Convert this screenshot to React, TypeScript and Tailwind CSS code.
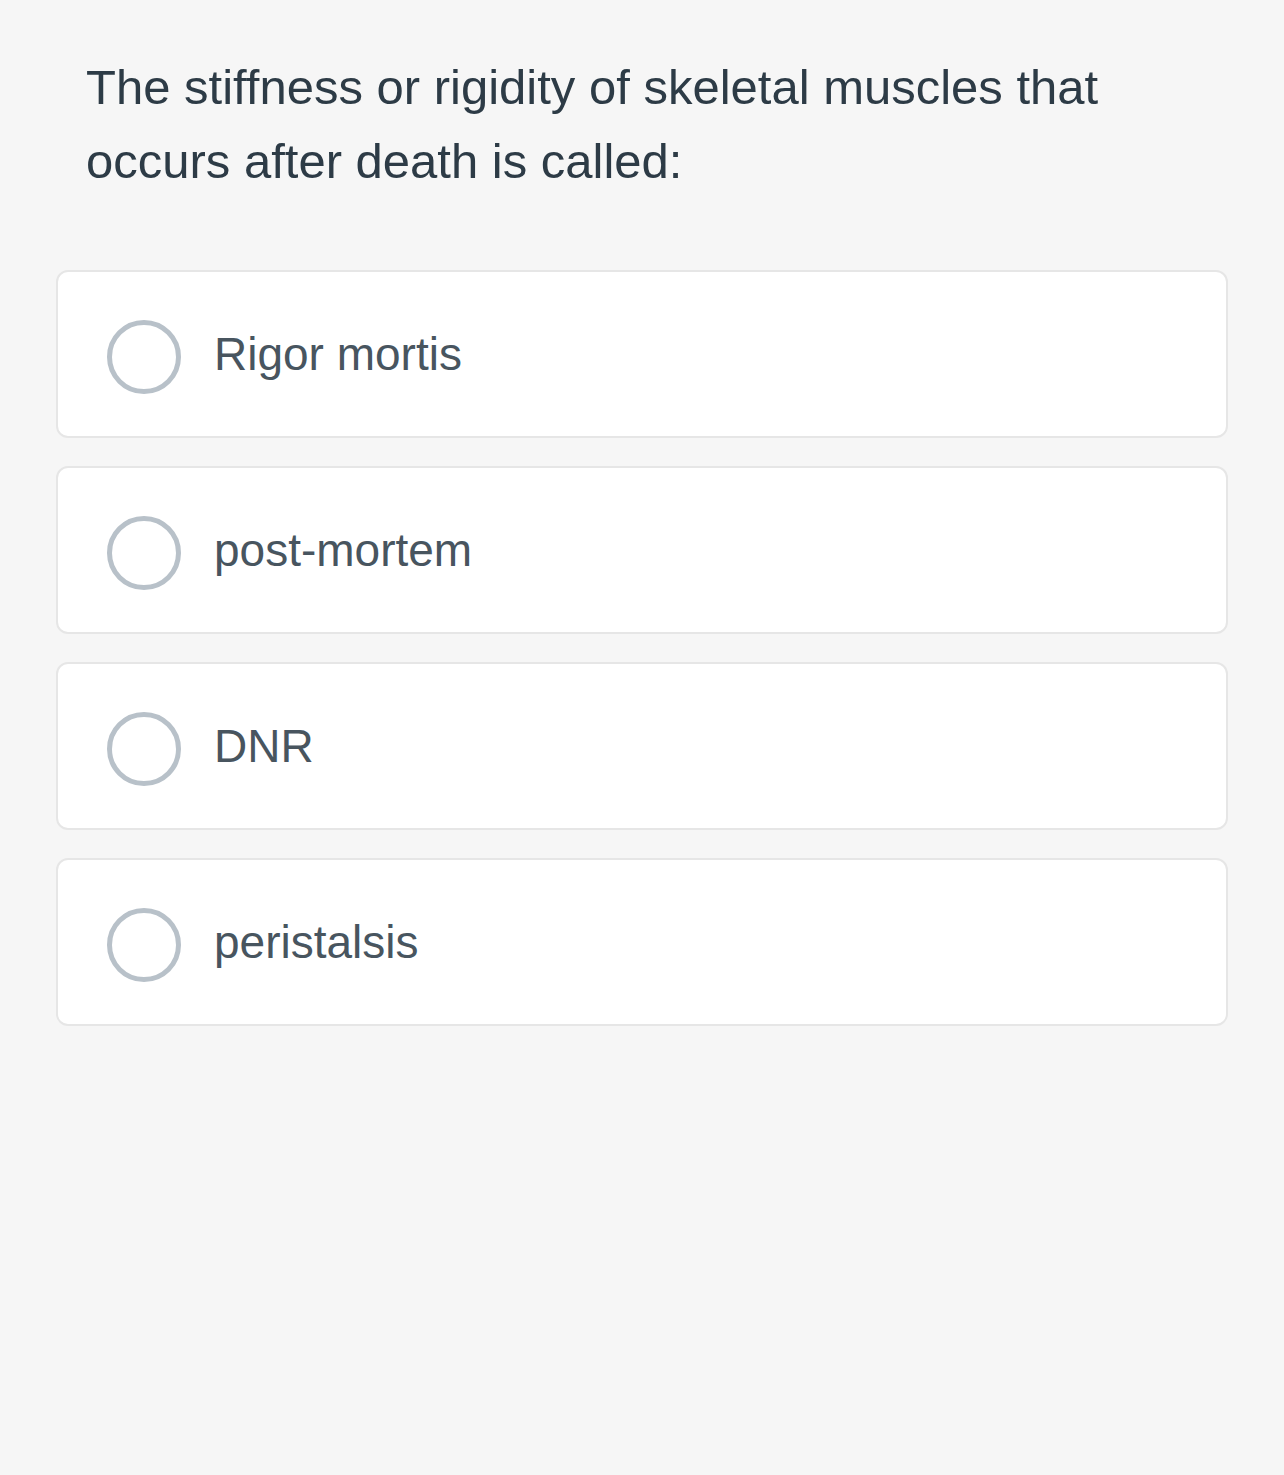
import React from "react";

const options = ["Rigor mortis", "post-mortem", "DNR", "peristalsis"];

export default function App() {
  return (
    <div
      className="min-h-[1475px] w-full bg-[#f6f6f6] pt-[50px]"
      style={{ fontFamily: '"Liberation Sans", Arial, sans-serif' }}
    >
      <h1 className="pl-[86px] pr-[60px] text-[49px] leading-[74px] font-normal text-[#2d3b46]">
        The stiffness or rigidity of skeletal muscles that occurs after death is called:
      </h1>
      <div className="mx-[56px] mt-[72px] flex flex-col gap-[28px]">
        {options.map((opt) => (
          <div
            key={opt}
            className="flex h-[168px] items-center rounded-[12px] border-2 border-[#e6e6e6] bg-white pl-[49px]"
          >
            <span className="mt-[5px] h-[74px] w-[74px] shrink-0 rounded-full border-[5px] border-[#b8c1c9]" />
            <span className="ml-[33px] text-[46px] leading-none text-[#48555f]">{opt}</span>
          </div>
        ))}
      </div>
    </div>
  );
}
